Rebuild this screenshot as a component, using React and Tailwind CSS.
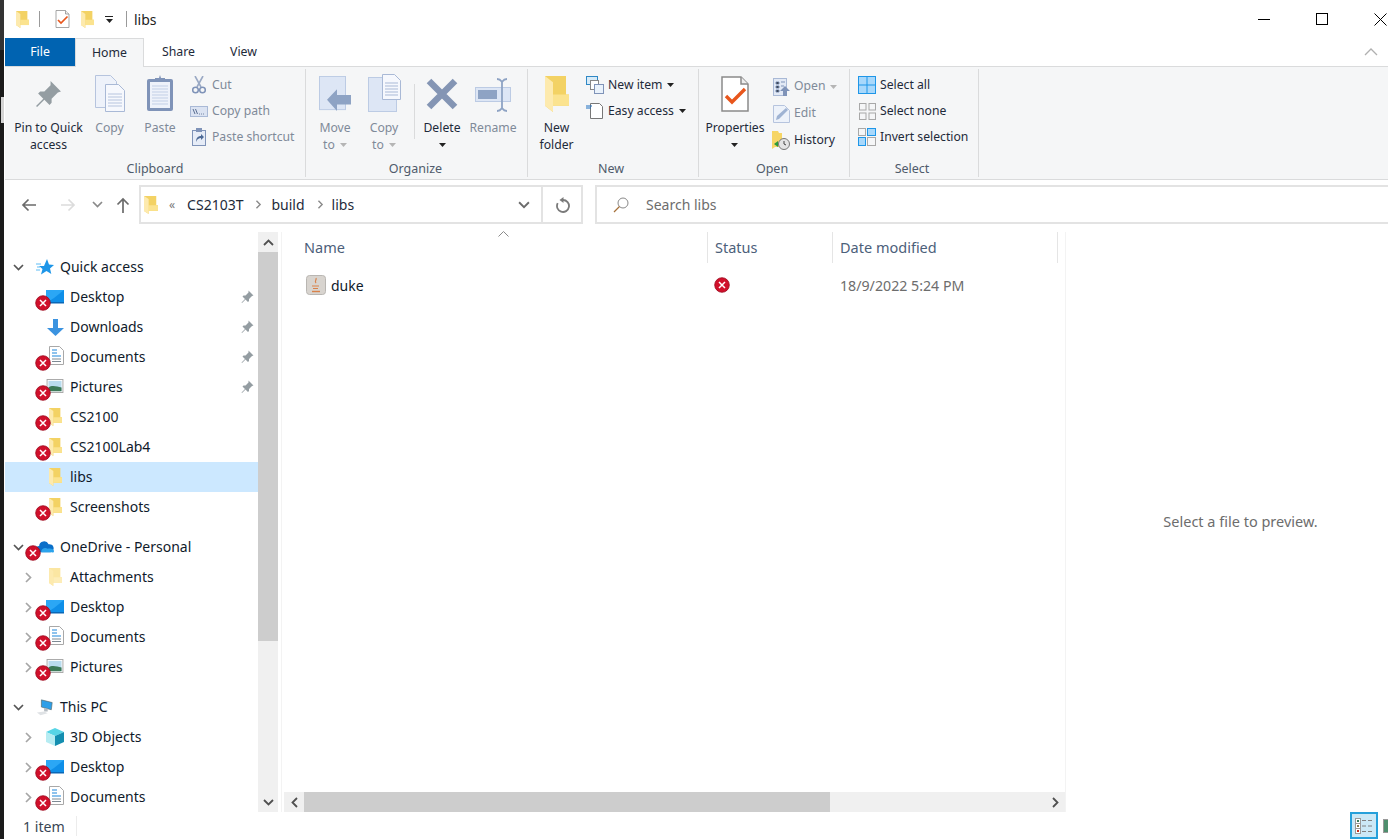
import React from 'react';

const F = "font-['Noto_Sans','Open_Sans',sans-serif]";

const Folder = ({ w = 16, h = 20, pale }) => (
  <svg width={w} height={h} viewBox="0 0 24 35" preserveAspectRatio="none">
    <path d="M0 0h21v18h3v11H8v6L0 29z" fill={pale ? '#fbe6a2' : '#f3d264'} />
    <path d="M8 18h16v11H8z" fill={pale ? '#fdedb8' : '#fbe38f'} />
    <path d="M0 0l8 6v29l-8-6z" fill="#fdeaae" />
  </svg>
);

const CheckDoc = ({ w = 16, h = 20 }) => (
  <svg width={w} height={h} viewBox="0 0 28 36">
    <path d="M1 1h19l7 7v27H1z" fill="#fff" stroke="#8a8a8a" strokeWidth="1.500" />
    <path d="M20 1v7h7" fill="#eee" stroke="#8a8a8a" strokeWidth="1.500" />
    <path d="M5 20l6 6L24 13" fill="none" stroke="#e8561c" strokeWidth="3.400" />
  </svg>
);

const Badge = ({ className }) => (
  <svg width="16" height="16" viewBox="0 0 16 16" className={`absolute ${className}`}>
    <circle cx="8" cy="8" r="7.300" fill="#d0102b" stroke="#9c0a1e" strokeWidth="0.800" />
    <path d="M5 5l6 6M11 5l-6 6" stroke="#fff" strokeWidth="1.500" />
  </svg>
);

const Monitor = () => (
  <svg width="18" height="14" viewBox="0 0 18 14" className="-mt-px">
    <rect x="0" y="0" width="18" height="13" fill="#0f8fe8" />
    <path d="M0 0h18L8 8 0 13z" fill="#2ba7f5" />
    <rect x="0" y="12" width="18" height="1.500" fill="#0a67b5" />
  </svg>
);
const DownArrow = () => (
  <svg width="17" height="17" viewBox="0 0 17 17">
    <path d="M6 0h5v9h6l-8.500 8L0 9h6z" fill="#3b93e0" />
  </svg>
);
const Docs = () => (
  <svg width="15" height="19" viewBox="0 0 15 19" className="-mt-[3px] ml-[3px]">
    <path d="M.5.500h10l4 4v14H.500z" fill="#fff" stroke="#a8a8a8" />
    <path d="M3 4h5M3 7h5M3 10h9" stroke="#1f88dc" strokeWidth="1.200" />
    <path d="M3 13h9M3 15.500h9" stroke="#7d8a94" strokeWidth="1" />
  </svg>
);
const Pics = () => (
  <svg width="18" height="14" viewBox="0 0 18 15" className="-mt-[2px]">
    <rect x=".5" y=".5" width="17" height="14" fill="#fff" stroke="#a6a6a6" />
    <rect x="2" y="2" width="14" height="11" fill="#b9dcef" />
    <path d="M2 9c4-3 9-1 14 0v4H2z" fill="#3c7a58" />
  </svg>
);
const Star = () => (
  <svg width="18" height="16" viewBox="0 0 18 16">
    <path d="M11 0l2 5.500 5 .5-4 3.500 1.300 5.500L10.500 12 5 15.500l1.500-5.500L3 7h5z" fill="#1e96e8" />
    <path d="M0 5h5M1 8h3M0 11h4" stroke="#5cbcf5" strokeWidth="1" />
  </svg>
);
const Cloud = () => (
  <svg width="20" height="13" viewBox="0 0 20 13" className="-mt-[2px]">
    <path d="M4 13a3.500 3.500 0 0 1-.5-7A5.500 5.500 0 0 1 14 4a4.500 4.500 0 0 1 2 9z" fill="#0a6fc9" />
    <path d="M6 13c-1-4 4-6 7-4 3-1 7 0 7 2.500S18 13 16 13z" fill="#2ba3ec" />
  </svg>
);
const Pc = () => (
  <svg width="20" height="19" viewBox="0 0 20 19">
    <path d="M6 1l12 3-1 8-11-3z" fill="#2d9fe8" stroke="#566" strokeWidth=".7" />
    <path d="M9 10l4 1v3H9z" fill="#b5bcc2" />
    <path d="M1 15l8-1 4 2-8 2z" fill="#dfe2e5" />
  </svg>
);
const Cube = () => (
  <svg width="18" height="18" viewBox="0 0 18 18">
    <path d="M9 0l9 4-9 4-9-4z" fill="#57d5e6" />
    <path d="M0 4l9 4v10l-9-4z" fill="#b6ecf2" />
    <path d="M18 4l-9 4v10l9-4z" fill="#138eb0" />
  </svg>
);
const Pin = ({ s = 13 }) => (
  <svg width={s} height={s} viewBox="0 0 26 26">
    <path d="M15 1l10 10-3 1-6 6 0 4-2 2-5-5-7 7-1-1 7-7-5-5 2-2 4 0 6-6z" fill="#949da2" />
  </svg>
);
const ChevDown = ({ c = '#555', s = 11 }) => (
  <svg width={s} height={s} viewBox="0 0 11 11"><path d="M1 3l4.500 4.500L10 3" fill="none" stroke={c} strokeWidth="1.700" /></svg>
);
const ChevRight = ({ c = '#a6a6a6', s = 11 }) => (
  <svg width={s} height={s} viewBox="0 0 11 11"><path d="M3 1l4.500 4.500L3 10" fill="none" stroke={c} strokeWidth="1.700" /></svg>
);
const Caret = ({ c = '#222' }) => (
  <svg width="7" height="4" viewBox="0 0 7 4" className="shrink-0"><path d="M0 0h7L3.500 4z" fill={c} /></svg>
);

const Large = ({ icon, lines, dim, caret, w, caretInline }) => (
  <div className={`flex flex-col items-center ${w}`}>
    <div className="h-[40px] flex items-end justify-center">{icon}</div>
    <div className={`mt-[7px] text-[12.2px] leading-[17px] text-center whitespace-nowrap ${dim ? 'text-[#7f8a99]' : 'text-[#1e2a3a]'}`}>
      {lines.map((l, i) => (
        <div key={l} className="flex items-center justify-center gap-[5px]">
          {l}
          {caretInline && i === lines.length - 1 && <Caret c="#b5b5b5" />}
        </div>
      ))}
      {caret && <div className="flex justify-center h-[17px] items-center"><Caret /></div>}
    </div>
  </div>
);

const Small = ({ icon, label, dim, caret, caretDim, h = 'h-[26px]' }) => (
  <div className={`${h} flex items-center gap-[4px] text-[12.2px] whitespace-nowrap ${dim ? 'text-[#7f8a99]' : 'text-[#1e2a3a]'}`}>
    <span className="w-[18px] h-[18px] flex items-center justify-center shrink-0">{icon}</span>
    <span>{label}</span>
    {caret && <span className="ml-[1px]"><Caret c={caretDim ? '#b5b5b5' : '#222'} /></span>}
  </div>
);

const Group = ({ w, label, children, labelPad = '' }) => (
  <div className={`${w} flex flex-col shrink-0 border-r border-[#dadbdc] my-[2px]`}>
    <div className="flex-1 flex items-start pt-[3px]">{children}</div>
    <div className={`h-[20px] pt-[2px] text-[12.5px] text-center text-[#4f5b6b] leading-[20px] ${labelPad}`}>{label}</div>
  </div>
);

const Row = ({ level = 1, icon, label, pin, chev, badge, selected, className = '' }) => (
  <div className={`relative h-[30px] flex items-center text-[14px] text-[#0f1a2b] whitespace-nowrap ${selected ? 'bg-[#cce8ff]' : ''} ${className}`}>
    <div className={`${level === 0 ? 'w-[31px] pl-[8px]' : 'w-[41px] pl-[18px]'} shrink-0 flex items-center`}>
      {chev === 'down' && <ChevDown />}
      {chev === 'right' && <ChevRight />}
    </div>
    <div className="w-[18px] flex items-center justify-center shrink-0">{icon}</div>
    <span className="ml-[6px] pb-[2px]">{label}</span>
    {pin && <span className="ml-auto mr-[4px] -mt-[2px] flex"><Pin /></span>}
    {badge && <Badge className={`${level === 0 ? 'left-[20px]' : 'left-[30px]'} top-[13px]`} />}
  </div>
);

const ViewBtns = () => (
  <div className="ml-auto flex items-stretch h-full">
    <div className="w-[28px] h-[27px] border-2 border-[#26a0da] bg-[#cbe8f6] flex items-center justify-center mr-[5px]">
      <svg width="18" height="16" viewBox="0 0 18 16">
        <rect x=".5" y=".5" width="5" height="15" fill="#fff" stroke="#999" />
        <path d="M1 5.500h4M1 10.500h4" stroke="#999" />
        <rect x="2" y="2" width="2" height="2" fill="#3c7a58" />
        <rect x="2" y="7" width="2" height="2" fill="#8a7a4a" />
        <rect x="2" y="12" width="2" height="2" fill="#c8301c" />
        <path d="M7 2.500h4M13 2.500h4M7 8h4M13 8h4M7 13.500h4M13 13.500h4" stroke="#808080" />
      </svg>
    </div>
    <div className="w-[5px] flex items-center">
      <svg width="5" height="14" viewBox="0 0 5 14">
        <rect x=".5" y=".5" width="8" height="13" fill="#4f8f6e" stroke="#999" />
      </svg>
    </div>
  </div>
);

export default function App() {
  return (
    <div className={`${F} w-[1388px] h-[839px] flex overflow-hidden bg-white`}>
      <div className="w-[5px] shrink-0 h-full flex flex-col">
        <div className="h-[50px] w-[4px] bg-[#333333]" />
        <div className="h-[47px] w-[4px] bg-[#1b1b1b]" />
        <div className="h-[26px] w-[4px] bg-[#1b1b1b] pl-px"><div className="h-full bg-[#d4d4d4]" /></div>
        <div className="flex-1 w-[4px] bg-[#1b1b1b]" />
      </div>
      <div className="flex-1 min-w-0 flex flex-col">
        {/* title bar */}
        <div className="h-[38px] shrink-0 flex items-center pl-[11px] text-[14px] text-[#222]">
          <Folder w={13} h={17} />
          <div className="w-px h-[16px] bg-[#9a9a9a] ml-[10px]" />
          <div className="ml-[15px] flex"><CheckDoc w={15} h={18} /></div>
          <div className="ml-[11px] flex"><Folder w={13} h={17} /></div>
          <div className="ml-[11px] flex flex-col items-center gap-[2px]">
            <div className="w-[8px] h-px bg-[#222]" />
            <Caret />
          </div>
          <div className="w-px h-[16px] bg-[#9a9a9a] ml-[13px]" />
          <span className="ml-[7px]">libs</span>
          <div className="ml-auto flex items-center">
            <div className="w-[12px] h-px bg-black" />
            <div className="ml-[46px] w-[12px] h-[12px] border border-black" />
            <svg className="ml-[46px] mr-[1px]" width="13" height="13" viewBox="0 0 13 13"><path d="M.500.500l12 12M12.500.500l-12 12" stroke="#000" /></svg>
          </div>
        </div>
        {/* tabs */}
        <div className="h-[29px] shrink-0 flex items-stretch text-[12.3px] text-[#1e2a3a] relative z-10 -mb-px">
          <div className="w-[70px] bg-[#0063b1] text-white flex items-center justify-center h-[28px]">File</div>
          <div className="w-[69px] bg-[#f5f6f7] border border-b-0 border-[#dadbdc] flex items-center justify-center">Home</div>
          <div className="w-[69px] flex items-center justify-center h-[28px]">Share</div>
          <div className="w-[61px] flex items-center justify-center h-[28px]">View</div>
          <div className="ml-auto mr-[10px] h-[28px] flex items-center">
            <svg width="14" height="8" viewBox="0 0 14 8"><path d="M1 7l6-6 6 6" fill="none" stroke="#b0b0b0" strokeWidth="1.300" /></svg>
          </div>
        </div>
        {/* ribbon */}
        <div className="h-[114px] shrink-0 bg-[#f5f6f7] border-y border-[#dadbdc] flex items-stretch">
          <Group w="w-[301px]" label="Clipboard">
            <Large w="w-[87px]" lines={['Pin to Quick', 'access']} icon={<span className="flex mb-[5px]"><Pin s={27} /></span>} />
            <Large w="w-[37px] -ml-[1px]" dim lines={['Copy']} icon={
              <svg width="30" height="37" viewBox="0 0 30 37">
                <path d="M.5.500h15l6 6v26H.500z" fill="#eef2fa" stroke="#b6c4de" />
                <path d="M10.500 9.500h13l6 6v21h-19z" fill="#f6f8fd" stroke="#a9b9d6" />
                <path d="M13 19h14M13 22h14M13 25h14M13 28h14M13 31h14" stroke="#b6c4de" />
              </svg>} />
            <Large w="w-[36px] ml-[14px]" dim lines={['Paste']} icon={
              <svg width="28" height="38" viewBox="0 0 28 38">
                <rect x="1" y="5" width="26" height="32" rx="2" fill="#7f93b8" />
                <rect x="4" y="8" width="20" height="26" fill="#eef2fa" />
                <path d="M6 12h16M6 15h16M6 18h16M6 21h16M6 24h16M6 27h16M6 30h16" stroke="#c2cfe6" />
                <path d="M9 8V4h4l1-3 1 3h4v4z" fill="#7f93b8" />
              </svg>} />
            <div className="ml-[12px] -mt-[3px] pt-[3px]">
              <Small dim label="Cut" icon={
                <svg width="14" height="18" viewBox="0 0 14 18">
                  <path d="M3 0l6 11M11 0L5 11" stroke="#9aa9c4" strokeWidth="1.600" />
                  <circle cx="3.500" cy="14" r="2.800" fill="none" stroke="#7f93b8" strokeWidth="1.500" />
                  <circle cx="10.500" cy="14" r="2.800" fill="none" stroke="#7f93b8" strokeWidth="1.500" />
                </svg>} />
              <Small dim label="Copy path" icon={
                <svg width="18" height="11" viewBox="0 0 18 11">
                  <rect x=".5" y=".5" width="17" height="10" fill="#dbe3f2" stroke="#a9b9d6" />
                  <path d="M3 3l2 5M5.500 3l2 5M9 8h.8M11 8h.8M13 8h.8" stroke="#5b6f92" />
                </svg>} />
              <Small dim label="Paste shortcut" icon={
                <svg width="14" height="18" viewBox="0 0 14 18">
                  <rect x=".5" y="2.500" width="13" height="15" fill="#e6ecf7" stroke="#7f93b8" />
                  <rect x="4" y="0" width="6" height="4" fill="#7f93b8" />
                  <path d="M4 14c0-4 2-6 5-6V6l3 3-3 3v-2c-2 0-4 1-5 4z" fill="#4d6a96" />
                </svg>} />
            </div>
          </Group>
          <Group w="w-[222px]" label="Organize" labelPad="pr-[2px]">
            <Large w="w-[56px] ml-[1px]" dim lines={['Move', 'to']} caretInline icon={
              <svg width="33" height="36" viewBox="0 0 33 38" preserveAspectRatio="none">
                <rect x=".5" y=".5" width="26" height="35" fill="#dde6f5" stroke="#bccbe4" />
                <path d="M32 20v10H18v7L8 25l10-11v6z" fill="#8ea3c4" />
              </svg>} />
            <Large w="w-[44px] -ml-[1px]" dim lines={['Copy', 'to']} caretInline icon={
              <svg width="33" height="38" viewBox="0 0 33 38">
                <rect x=".5" y="3.500" width="28" height="34" fill="#dde6f5" stroke="#bccbe4" />
                <path d="M14.500.500h12l6 6v19h-18z" fill="#f6f8fd" stroke="#a9b9d6" />
                <path d="M17 9h13M17 12h13M17 15h13M17 18h13M17 21h13" stroke="#a9b9d6" />
              </svg>} />
            <div className="w-px h-[55px] bg-[#dadbdc] mt-[12px] ml-[8px]" />
            <Large w="w-[54px]" lines={['Delete']} caret icon={
              <span className="flex mb-[2px]">
                <svg width="32" height="32" viewBox="0 0 32 32">
                  <path d="M3 3l26 26M29 3L3 29" stroke="#8495b4" strokeWidth="6.500" />
                </svg>
              </span>} />
            <Large w="w-[50px] -ml-[1px]" dim lines={['Rename']} icon={
              <svg width="36" height="34" viewBox="0 0 36 34">
                <rect x=".5" y="9.500" width="35" height="14" fill="#dde6f5" stroke="#bccbe4" />
                <rect x="3" y="12" width="19" height="9" fill="#8ea3c4" />
                <path d="M22 1c4 0 4 2 5 3 1-1 1-3 5-3M27 4v26M22 33c4 0 4-2 5-3 1 1 1 3 5 3" fill="none" stroke="#8ea3c4" strokeWidth="1.800" />
              </svg>} />
          </Group>
          <Group w="w-[171px]" label="New" labelPad="pr-[4px]">
            <Large w="w-[57px]" lines={['New', 'folder']} icon={<Folder w={24} h={36} />} />
            <div className="ml-[1px] pt-0">
              <Small caret label="New item" icon={
                <svg width="18" height="18" viewBox="0 0 18 18">
                  <rect x=".5" y=".5" width="11" height="8" fill="#d7ebf8" stroke="#2f88c5" />
                  <rect x="4.500" y="4.500" width="8" height="9" fill="#fff" stroke="#888" />
                  <rect x="8.500" y="8.500" width="9" height="9" fill="#eaf2fb" stroke="#7f93b8" />
                </svg>} />
              <Small caret label="Easy access" icon={
                <svg width="18" height="18" viewBox="0 0 18 18">
                  <path d="M4.500 1.500h9l3 3v12h-12z" fill="#fff" stroke="#777" />
                  <path d="M0 4h6M0 6h5" stroke="#1d6fc0" />
                </svg>} />
            </div>
          </Group>
          <Group w="w-[151px]" label="Open" labelPad="pr-[4px]">
            <Large w="w-[72px]" lines={['Properties']} caret icon={<CheckDoc w={28} h={36} />} />
            <div className="ml-[1px] pt-[1px]">
              <Small h="h-[27px]" dim caret caretDim label="Open" icon={
                <svg width="17" height="18" viewBox="0 0 17 18">
                  <rect x=".5" y=".5" width="13" height="17" fill="#e2e9f5" stroke="#a9b9d6" />
                  <path d="M3 4h3v2H3zM3 8h3v2H3zM3 12h3v2H3zM8 4h4M8 8h3" stroke="#7f93b8" />
                  <path d="M12 8l5 5h-3v5h-4v-5H7z" fill="#7f93b8" />
                </svg>} />
              <Small h="h-[27px]" dim label="Edit" icon={
                <svg width="17" height="18" viewBox="0 0 17 18">
                  <path d="M.5.500h11l5 5v12H.500z" fill="#edf2fa" stroke="#b6c4de" />
                  <path d="M3 15l1-4L13 3l2 2-9 9z" fill="#9fb3d3" />
                </svg>} />
              <Small h="h-[27px]" label="History" icon={
                <svg width="18" height="19" viewBox="0 0 18 19">
                  <path d="M0 0h6l1 2h3v14H3l-3 2z" fill="#f6d565" />
                  <circle cx="12" cy="13" r="5.500" fill="#e4e4e4" stroke="#777" />
                  <path d="M12 10v3l2 1" fill="none" stroke="#444" />
                  <path d="M2 13l4-3v6z" fill="#2c9a3a" />
                </svg>} />
            </div>
          </Group>
          <Group w="w-[129px]" label="Select" labelPad="pr-[4px]">
            <div className="pl-[8px] pt-0">
              <Small label="Select all" icon={
                <svg width="18" height="18" viewBox="0 0 18 18">
                  <rect x=".5" y=".5" width="17" height="17" fill="#a8d8fb" stroke="#1e96e8" />
                  <path d="M9 0v18M0 9h18" stroke="#1e96e8" />
                </svg>} />
              <Small label="Select none" icon={
                <svg width="17" height="17" viewBox="0 0 17 17" fill="none" stroke="#a8a8a8">
                  <rect x=".5" y=".5" width="6.500" height="6.500" />
                  <rect x="10" y=".5" width="6.500" height="6.500" />
                  <rect x=".5" y="10" width="6.500" height="6.500" />
                  <rect x="10" y="10" width="6.500" height="6.500" />
                </svg>} />
              <Small label="Invert selection" icon={
                <svg width="18" height="18" viewBox="0 0 18 18">
                  <rect x=".5" y=".5" width="7" height="7" fill="none" stroke="#a8a8a8" />
                  <rect x="9.500" y=".5" width="8" height="7" fill="#a8d8fb" stroke="#1e96e8" />
                  <rect x=".5" y="9.500" width="7" height="8" fill="#a8d8fb" stroke="#1e96e8" />
                  <rect x="9.500" y="9.500" width="8" height="8" fill="none" stroke="#a8a8a8" />
                </svg>} />
            </div>
          </Group>
        </div>
        {/* address row */}
        <div className="h-[52px] pb-[3px] shrink-0 flex items-center text-[14px]">
          <div className="w-[134px] shrink-0 flex items-center pl-[16px]">
            <svg width="16" height="14" viewBox="0 0 16 14"><path d="M15 7H2M7.500 1.500L2 7l5.500 5.500" fill="none" stroke="#6b6b6b" strokeWidth="1.700" /></svg>
            <svg className="ml-[23px]" width="16" height="14" viewBox="0 0 16 14"><path d="M1 7h13M8.500 1.500L14 7l-5.500 5.500" fill="none" stroke="#dcdcdc" strokeWidth="1.700" /></svg>
            <span className="ml-[16px] flex"><ChevDown c="#8a8a8a" s={11} /></span>
            <svg className="ml-[13px]" width="14" height="16" viewBox="0 0 14 16"><path d="M7 16V2M1.500 7.500L7 2l5.500 5.500" fill="none" stroke="#6b6b6b" strokeWidth="1.700" /></svg>
          </div>
          <div className="w-[444px] h-[39px] shrink-0 border-2 border-[#e3e3e3] flex items-center pl-[3px] text-[#1e2a3a]">
            <Folder w={14} h={18} />
            <span className="ml-[11px] text-[#777] text-[12px]">«</span>
            <span className="ml-[12px]">CS2103T</span>
            <span className="ml-[11px] flex"><ChevRight c="#8a8a8a" s={9} /></span>
            <span className="ml-[8px]">build</span>
            <span className="ml-[11px] flex"><ChevRight c="#8a8a8a" s={9} /></span>
            <span className="ml-[7px]">libs</span>
            <span className="ml-auto mr-[11px] flex"><ChevDown c="#6b6b6b" s={12} /></span>
            <div className="w-[40px] h-full border-l-2 border-[#e3e3e3] flex items-center justify-center">
              <svg width="15" height="16" viewBox="0 0 15 16"><path d="M8 3a6 6 0 1 1-5.300 3.200" fill="none" stroke="#7a7a7a" strokeWidth="1.800" /><path d="M8.500 0v6L4.500 3z" fill="#7a7a7a" /></svg>
            </div>
          </div>
          <div className="ml-[12px] flex-1 h-[39px] -mr-[4px] border-2 border-[#e3e3e3] flex items-center pl-[16px] text-[#6d6d6d]">
            <svg width="16" height="16" viewBox="0 0 16 16"><circle cx="10" cy="6" r="5" fill="none" stroke="#888" /><path d="M6.500 9.500L1 15" stroke="#a5703a" strokeWidth="1.200" /></svg>
            <span className="ml-[17px]">Search libs</span>
          </div>
        </div>
        {/* body */}
        <div className="flex-1 min-h-0 flex">
          <div className="w-[253px] shrink-0 overflow-hidden pt-[20px]">
            <Row level={0} chev="down" icon={<Star />} label="Quick access" />
            <Row pin badge icon={<Monitor />} label="Desktop" />
            <Row pin icon={<DownArrow />} label="Downloads" />
            <Row pin badge icon={<Docs />} label="Documents" />
            <Row pin badge icon={<Pics />} label="Pictures" />
            <Row badge icon={<Folder w={13} h={18} />} label="CS2100" />
            <Row badge icon={<Folder w={13} h={18} />} label="CS2100Lab4" />
            <Row selected icon={<Folder w={13} h={18} />} label="libs" />
            <Row badge icon={<Folder w={13} h={18} />} label="Screenshots" />
            <Row level={0} chev="down" badge className="mt-[10px]" icon={<Cloud />} label="OneDrive - Personal" />
            <Row chev="right" icon={<Folder w={13} h={18} pale />} label="Attachments" />
            <Row chev="right" badge icon={<Monitor />} label="Desktop" />
            <Row chev="right" badge icon={<Docs />} label="Documents" />
            <Row chev="right" badge icon={<Pics />} label="Pictures" />
            <Row level={0} chev="down" className="mt-[10px]" icon={<Pc />} label="This PC" />
            <Row chev="right" icon={<Cube />} label="3D Objects" />
            <Row chev="right" badge icon={<Monitor />} label="Desktop" />
            <Row chev="right" badge icon={<Docs />} label="Documents" />
          </div>
          {/* nav scrollbar */}
          <div className="w-[20px] shrink-0 flex flex-col bg-[#f0f0f0]">
            <div className="h-[20px] flex items-center justify-center">
              <svg width="11" height="7" viewBox="0 0 11 7"><path d="M1 6l4.500-4.500L10 6" fill="none" stroke="#505050" strokeWidth="1.800" /></svg>
            </div>
            <div className="h-[389px] bg-[#cdcdcd]" />
            <div className="flex-1" />
            <div className="h-[20px] flex items-center justify-center">
              <svg width="11" height="7" viewBox="0 0 11 7"><path d="M1 1l4.500 4.500L10 1" fill="none" stroke="#505050" strokeWidth="1.800" /></svg>
            </div>
          </div>
          <div className="w-[3px] shrink-0" />
          <div className="w-[785px] shrink-0 border-x border-[#f3f3f3] flex flex-col">
            <div className="flex-1 min-h-0 text-[14.5px]">
              <div className="relative h-[31px] flex text-[#4c607a]">
                <div className="w-[426px] pl-[22px] pt-[1px] flex items-center border-r border-[#e5e5e5] shrink-0">Name</div>
                <div className="w-[125px] pl-[7px] pt-[1px] flex items-center border-r border-[#e5e5e5] shrink-0">Status</div>
                <div className="w-[225px] pl-[7px] pt-[1px] flex items-center border-r border-[#e5e5e5] shrink-0">Date modified</div>
                <svg className="absolute left-[216px] -top-[1px]" width="11" height="6" viewBox="0 0 11 6"><path d="M.5 5.500L5.500.5l5 5" fill="none" stroke="#8a8a8a" /></svg>
              </div>
              <div className="h-[30px] mt-[7px] flex items-center">
                <div className="w-[426px] shrink-0 pl-[24px] flex items-center text-[#0f1a2b] text-[14px]">
                  <svg width="20" height="20" viewBox="0 0 20 20">
                    <rect x=".5" y=".5" width="19" height="19" rx="3" fill="#d8d4cf" stroke="#b9b6b2" />
                    <path d="M10 3c1 2-2 3 0 5M6 11h7M7 13.500h5" fill="none" stroke="#d9824a" strokeWidth="1.200" />
                    <path d="M6 16.500h8" stroke="#d9824a" strokeWidth="1.400" />
                  </svg>
                  <span className="ml-[5px]">duke</span>
                </div>
                <div className="w-[125px] shrink-0 pl-[6px] h-full flex items-center">
                  <svg width="16" height="16" viewBox="0 0 16 16" className="-mt-[1px]">
                    <circle cx="8" cy="8" r="7.300" fill="#d0102b" stroke="#9c0a1e" strokeWidth=".8" />
                    <path d="M5 5l6 6M11 5l-6 6" stroke="#fff" strokeWidth="1.500" />
                  </svg>
                </div>
                <div className="pl-[7px] pt-[1px] text-[14.2px] text-[#6d6d6d] whitespace-nowrap">18/9/2022 5:24 PM</div>
              </div>
            </div>
            <div className="h-[20px] shrink-0 ml-[2px] flex bg-[#f0f0f0] items-stretch">
              <div className="w-[20px] flex items-center justify-center">
                <svg width="7" height="11" viewBox="0 0 7 11"><path d="M6 1L1.500 5.500 6 10" fill="none" stroke="#505050" strokeWidth="1.800" /></svg>
              </div>
              <div className="w-[526px] bg-[#cdcdcd]" />
              <div className="flex-1" />
              <div className="w-[20px] flex items-center justify-center">
                <svg width="7" height="11" viewBox="0 0 7 11"><path d="M1 1l4.500 4.500L1 10" fill="none" stroke="#505050" strokeWidth="1.800" /></svg>
              </div>
            </div>
          </div>
          <div className="flex-1 flex items-center justify-center pl-[27px] text-[14.5px] text-[#6d6d6d]">Select a file to preview.</div>
        </div>
        {/* status */}
        <div className="h-[27px] shrink-0 flex items-center text-[14.2px] text-[#3a4654]">
          <span className="ml-[18px] w-[53px] pt-[2px]">1 item</span>
          <div className="w-px h-[20px] bg-[#ececec]" />
          <ViewBtns />
        </div>
      </div>
    </div>
  );
}
